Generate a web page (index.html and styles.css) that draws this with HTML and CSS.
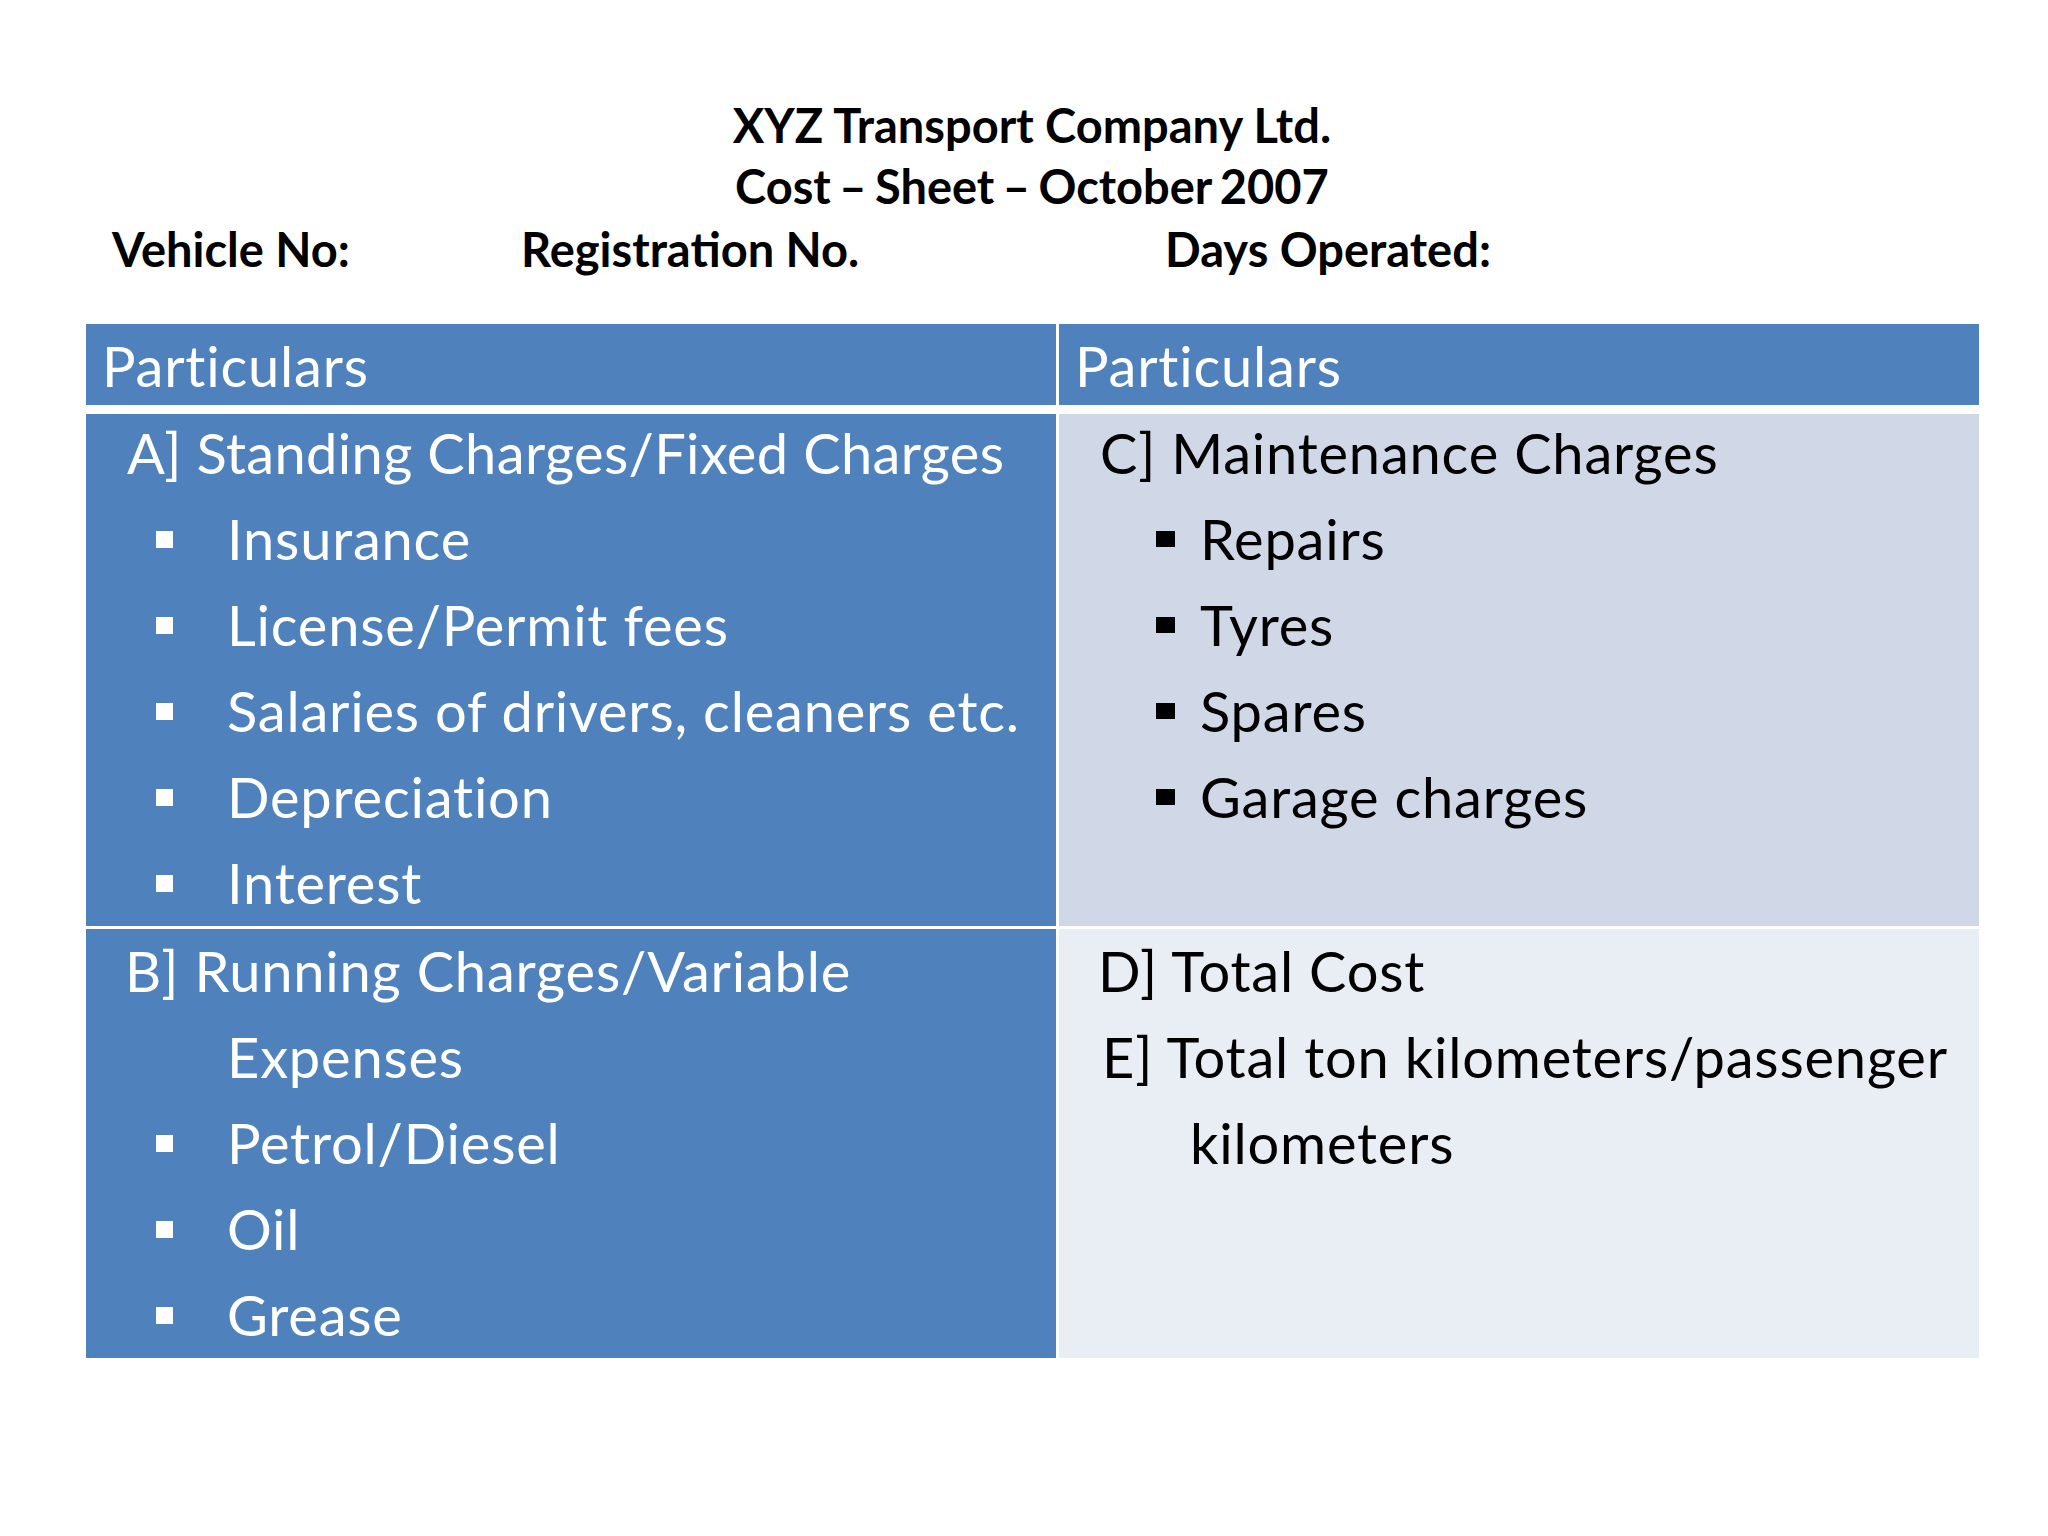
FILE: index.html
```html
<!DOCTYPE html>
<html lang="en">
<head>
<meta charset="utf-8">
<title>Cost Sheet</title>
<link rel="stylesheet" href="styles.css">
</head>
<body>
<div class="slide">
  <header class="titles">
    <h1 class="title-line">XYZ Transport Company Ltd.</h1>
    <h2 class="title-line title-sub">Cost – Sheet – October 2007</h2>
  </header>
  <div class="info">
    <span class="info-vehicle">Vehicle No:</span>
    <span class="info-reg">Registration No.</span>
    <span class="info-days">Days Operated:</span>
  </div>
  <div class="sheet">
    <div class="head">Particulars</div>
    <div class="head">Particulars</div>

    <div class="cell dark row-top">
      <div class="heading heading-a">A] Standing Charges/Fixed Charges</div>
      <ul class="list">
        <li class="item">Insurance</li>
        <li class="item">License/Permit fees</li>
        <li class="item">Salaries of drivers, cleaners etc.</li>
        <li class="item">Depreciation</li>
        <li class="item">Interest</li>
      </ul>
    </div>
    <div class="cell light1 row-top">
      <div class="heading heading-c">C] Maintenance Charges</div>
      <ul class="list list-black">
        <li class="item">Repairs</li>
        <li class="item">Tyres</li>
        <li class="item">Spares</li>
        <li class="item">Garage charges</li>
      </ul>
    </div>

    <div class="cell dark row-bottom">
      <div class="heading heading-b">B] Running Charges/Variable<br>Expenses</div>
      <ul class="list">
        <li class="item">Petrol/Diesel</li>
        <li class="item">Oil</li>
        <li class="item">Grease</li>
      </ul>
    </div>
    <div class="cell light2 row-bottom">
      <div class="heading heading-d">D] Total Cost</div>
      <div class="heading heading-e">E] Total ton kilometers/passenger<br>kilometers</div>
    </div>
  </div>
</div>
</body>
</html>
```

FILE: styles.css
```css
html, body {
  margin: 0;
  padding: 0;
  background: #ffffff;
}

body {
  font-family: Lato, "Open Sans", sans-serif;
  color: #000000;
}

.slide {
  width: 2048px;
  height: 1536px;
  overflow: hidden;
  background: #ffffff;
}

.titles {
  margin-top: 95px;
  padding-left: 16px;
  text-align: center;
  font-weight: 700;
  font-size: 47px;
  line-height: 61px;
}

.title-line {
  margin: 0;
  font-size: inherit;
  font-weight: inherit;
  line-height: inherit;
}

.title-sub {
  word-spacing: -3px;
}

.info {
  display: flex;
  margin-top: 1px;
  padding-left: 112px;
  font-weight: 700;
  font-size: 47px;
  line-height: 62px;
  white-space: nowrap;
}

.info-vehicle { width: 409px; }
.info-reg { width: 644px; }

.sheet {
  margin: 44px 0 0 86px;
  display: grid;
  grid-template-columns: 970px 920px;
  grid-template-rows: 87px 512px 429px;
  column-gap: 3px;
  row-gap: 3px;
  font-size: 56px;
  letter-spacing: 0.8px;
  white-space: nowrap;
}

.head {
  background: #4f81bd;
  color: #ffffff;
  margin-bottom: 6px;
  padding: 2px 0 0 16px;
  line-height: 79px;
}

.cell {
  line-height: 86px;
}

.row-top > :first-child { margin-top: -4px; }
.row-bottom > :first-child { margin-top: -1px; }

.dark { background: #4f81bd; color: #ffffff; }
.light1 { background: #d0d8e8; color: #000000; }
.light2 { background: #e9edf4; color: #000000; }

.heading {
  padding-left: 141px;
  text-indent: -100px;
}

.heading-a { letter-spacing: 0.35px; }
.heading-c { text-indent: -100px; }
.heading-b { text-indent: -102px; }
.heading-d { text-indent: -102px; }
.heading-e { padding-left: 131px; text-indent: -88px; }

.list {
  list-style: none;
  margin: 0;
  padding: 0;
}

.item {
  padding-left: 141px;
}

.item::before {
  content: "";
  display: inline-block;
  width: 17px;
  height: 17px;
  margin-left: -71px;
  margin-right: 54px;
  margin-bottom: 12px;
  background: #ffffff;
}

.list-black .item::before {
  width: 19px;
  height: 16px;
  margin-left: -44px;
  margin-right: 25px;
  margin-bottom: 13px;
  background: #000000;
}
```
